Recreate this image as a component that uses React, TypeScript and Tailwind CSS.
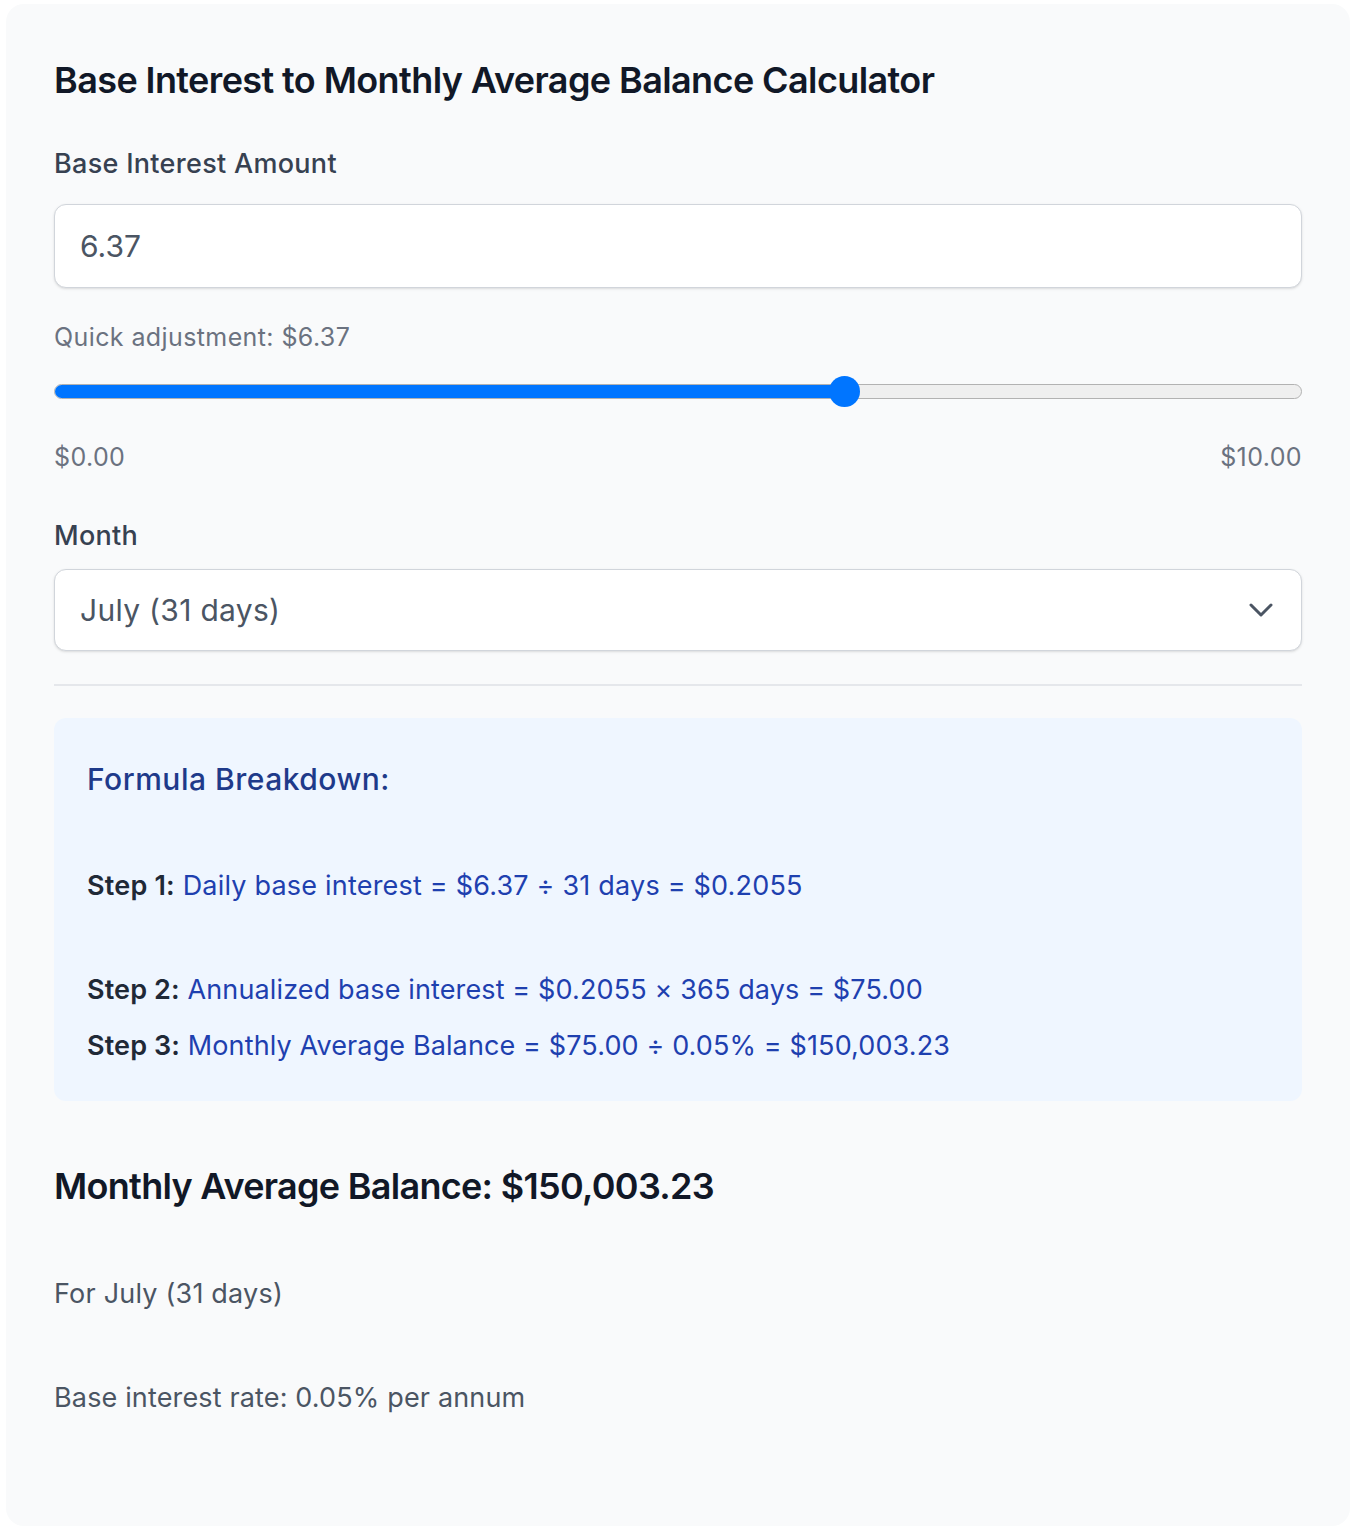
import { useState } from 'react';

const MONTHS = [
  ['January', 31], ['February', 28], ['March', 31], ['April', 30], ['May', 31], ['June', 30],
  ['July', 31], ['August', 31], ['September', 30], ['October', 31], ['November', 30], ['December', 31],
] as const;

const RATE = 0.05;

export default function App() {
  const [amount, setAmount] = useState('6.37');
  const [month, setMonth] = useState(6);

  const value = Number(amount) || 0;
  const [mName, days] = MONTHS[month];
  const daily = value / days;
  const annual = daily * 365;
  const balance = annual / (RATE / 100);
  const money = (n: number) => n.toLocaleString('en-US', { minimumFractionDigits: 2, maximumFractionDigits: 2 });
  const frac = Math.min(Math.max(value / 10, 0), 1);

  return (
    <div className="bg-white min-h-[1530px] pt-[4px] px-[6px]" style={{ fontFamily: 'Inter, "Noto Sans", sans-serif' }}>
      <div className="w-[1344px] bg-[#f9fafb] rounded-[18px] pt-[49px] px-[48px] pb-[108px]">
        <h2 className="text-[36px] leading-[54px] font-semibold tracking-[-0.6px] text-[#111827]">
          Base Interest to Monthly Average Balance Calculator
        </h2>

        <label className="block mt-[39px] text-[27px] leading-[36px] font-medium tracking-[0.3px] text-[#374151]">Base Interest Amount</label>
        <input
          value={amount}
          onChange={(e) => setAmount(e.target.value)}
          className="mt-[22px] block w-full h-[84px] px-[25px] text-[30px] text-[#4b5563] bg-white border-[1.5px] border-[#d1d5db] rounded-[12px] shadow-sm outline-none"
        />

        <div className="mt-[31px] text-[25px] leading-[36px] tracking-[0.4px] text-[#6b7280]">Quick adjustment: ${value.toFixed(2)}</div>

        <div className="mt-[20px] h-[32px] relative flex items-center">
          <div className="w-full h-[15px] rounded-full bg-[#efefef] border-[1.5px] border-[#b2b2b2] overflow-hidden">
            <div className="h-full bg-[#0075ff]" style={{ width: `calc(15.5px + ${frac} * (100% - 31px))` }} />
          </div>
          <div
            className="absolute top-[1px] w-[31px] h-[31px] rounded-full bg-[#0075ff]"
            style={{ left: `calc(${frac} * (100% - 31px))` }}
          />
        </div>

        <div className="mt-[32px] flex justify-between text-[25px] leading-[36px] tracking-[0.4px] text-[#6b7280]">
          <span>$0.00</span>
          <span>$10.00</span>
        </div>

        <label className="block mt-[43px] text-[27px] leading-[36px] font-medium tracking-[0.3px] text-[#374151]">Month</label>
        <div className="mt-[15px] relative">
          <select
            value={month}
            onChange={(e) => setMonth(Number(e.target.value))}
            className="block w-full h-[82px] px-[25px] appearance-none text-[30px] tracking-[0.3px] text-[#4b5563] bg-white border-[1.5px] border-[#d1d5db] rounded-[12px] shadow-sm outline-none"
          >
            {MONTHS.map(([n, d], i) => <option key={n} value={i}>{n} ({d} days)</option>)}
          </select>
          <svg className="absolute right-[28px] top-[32px] pointer-events-none" width="26" height="18" viewBox="0 0 26 18" fill="none">
            <polyline points="3,4 13,14 23,4" stroke="#4b5563" strokeWidth="3" strokeLinecap="round" strokeLinejoin="round" />
          </svg>
        </div>

        <div className="mt-[33px] h-[2px] bg-[#e5e7eb]" />

        <div className="mt-[32px] bg-[#eff6ff] rounded-[12px] pt-[41px] pb-[35px] px-[33px]">
          <h3 className="text-[30px] leading-[40px] font-medium tracking-[0.5px] text-[#1e3a8a]">Formula Breakdown:</h3>
          <p className="mt-[67px] text-[27px] leading-[40px] tracking-[0.2px] text-[#1e40af]">
            <span className="font-semibold text-[#1f2937]">Step 1:</span> Daily base interest = ${value.toFixed(2)} ÷ {days} days = ${daily.toFixed(4)}
          </p>
          <p className="mt-[64px] text-[27px] leading-[40px] tracking-[0.13px] text-[#1e40af]">
            <span className="font-semibold text-[#1f2937]">Step 2:</span> Annualized base interest = ${daily.toFixed(4)} × 365 days = ${money(annual)}
          </p>
          <p className="mt-[16px] text-[27px] leading-[40px] tracking-[0.12px] text-[#1e40af]">
            <span className="font-semibold text-[#1f2937]">Step 3:</span> Monthly Average Balance = ${money(annual)} ÷ {RATE}% = ${money(balance)}
          </p>
        </div>

        <div className="mt-[58px] text-[36px] leading-[54px] font-semibold tracking-[-0.7px] text-[#111827]">
          Monthly Average Balance: ${money(balance)}
        </div>
        <p className="mt-[61px] text-[27px] leading-[40px] tracking-[0.2px] text-[#4b5563]">For {mName} ({days} days)</p>
        <p className="mt-[64px] text-[27px] leading-[40px] tracking-[0.15px] text-[#4b5563]">Base interest rate: {RATE}% per annum</p>
      </div>
    </div>
  );
}
